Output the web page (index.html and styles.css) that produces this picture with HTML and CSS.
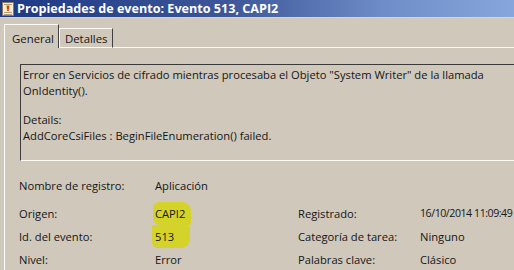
FILE: index.html
```html
<!DOCTYPE html>
<html lang="es">
<head>
<meta charset="utf-8">
<title>Propiedades de evento</title>
<link rel="stylesheet" href="styles.css">
</head>
<body>
<div class="window">
  <div class="titlebar">
    <svg class="ticon" width="12" height="14" viewBox="0 0 12 14">
      <rect x="0.5" y="0.5" width="11" height="13" fill="#f4ecd8" stroke="#8a7a5a"/>
      <rect x="2" y="2" width="8" height="1" fill="#b0a080"/>
      <rect x="2" y="10" width="8" height="1" fill="#b0a080"/>
      <rect x="2" y="12" width="8" height="1" fill="#b0a080"/>
      <path d="M4 3 L8 3 L7 9 L5 9 Z" fill="#e8c020"/>
      <rect x="5.2" y="4" width="1.6" height="3" fill="#c02020"/>
      <rect x="5.2" y="7.5" width="1.6" height="1.2" fill="#c02020"/>
    </svg>
    <span class="ttext">Propiedades de evento: Evento 513, CAPI2</span>
  </div>
  <div class="body">
    <div class="tabs">
      <div class="tab active">General</div>
      <div class="tab">Detalles</div>
      <div class="tabline"></div>
    </div>
    <div class="panel">
      <div class="msgbox">
        <p class="line">Error en Servicios de cifrado mientras procesaba el Objeto "System Writer" de la llamada</p>
        <p class="line">OnIdentity().</p>
        <p class="line gap">Details:</p>
        <p class="line">AddCoreCsiFiles : BeginFileEnumeration() failed.</p>
      </div>
      <div class="props">
        <div class="lbl first">Nombre de registro:</div>
        <div class="val first">Aplicación</div>
        <div class="first"></div>
        <div class="first"></div>

        <div class="lbl">Origen:</div>
        <div class="val"><span class="hl hl1">CAPI2</span></div>
        <div class="lbl">Registrado:</div>
        <div class="val date">16/10/2014 11:09:49</div>

        <div class="lbl">Id. del evento:</div>
        <div class="val"><span class="hl hl2">513</span></div>
        <div class="lbl">Categoría de tarea:</div>
        <div class="val">Ninguno</div>

        <div class="lbl">Nivel:</div>
        <div class="val">Error</div>
        <div class="lbl">Palabras clave:</div>
        <div class="val">Clásico</div>
      </div>
    </div>
  </div>
</div>
</body>
</html>
```
FILE: styles.css
```css
html, body {
  margin: 0;
  padding: 0;
  width: 514px;
  height: 270px;
  overflow: hidden;
  background: #cfc8bb;
}
.window {
  width: 514px;
  height: 270px;
  overflow: hidden;
  font-family: "Open Sans", "Noto Sans", sans-serif;
  font-size: 11.2px;
  color: #161616;
}
.titlebar {
  height: 17px;
  display: flex;
  align-items: center;
  gap: 3px;
  padding-left: 2px;
  background: linear-gradient(to right, #1d3984 0%, #3d5799 45%, #6f8dc8 75%, #86a6dc 100%);
  border-bottom: 1px solid #d8d4cc;
}
.ticon { flex: none; }
.ttext {
  color: #fff;
  font-weight: bold;
  font-size: 12.6px;
  white-space: nowrap;
}
.body {
  padding-top: 6px;
}
.tabs {
  display: flex;
  align-items: flex-end;
  padding-left: 4px;
  height: 24px;
}
.tab {
  box-sizing: border-box;
  height: 20px;
  padding: 0 4px 0 5px;
  border-top: 1px solid #fcfbf8;
  border-left: 1px solid #fcfbf8;
  border-right: 1px solid #404040;
  border-bottom: 1px solid #fcfbf8;
  display: flex;
  align-items: center;
  white-space: nowrap;
  font-size: 11.4px;
}
.tab.active {
  height: 24px;
  padding: 3px 4px 0 7px;
  border-bottom: none;
}
.tabline {
  flex: 1;
  border-bottom: 1px solid #fcfbf8;
}
.panel {
  margin-left: 4px;
  border-left: 1px solid #fcfbf8;
  padding: 16px 0 0 15px;
}
.msgbox {
  box-sizing: border-box;
  width: 520px;
  height: 97px;
  border-top: 1px solid #3a3a3a;
  border-left: 1px solid #3a3a3a;
  border-bottom: 1px solid #fcfbf8;
  padding: 2px 0 0 2px;
}
.line {
  margin: 0;
  line-height: 16px;
  white-space: nowrap;
}
.line.gap {
  margin-top: 13px;
}
.props {
  display: grid;
  grid-template-columns: 136px 143px 122px 1fr;
  align-items: center;
  margin-top: 13px;
  margin-left: -1px;
  white-space: nowrap;
}
.props > div {
  height: 23px;
  line-height: 23px;
}
.props > .first {
  height: 28px;
  line-height: 23px;
}
.date {
  font-size: 10.6px;
  letter-spacing: -0.45px;
}
.hl {
  display: inline-block;
  background: #d4d32a;
  line-height: 17px;
}
.hl1 {
  padding: 3px 6px 3px 2px;
  margin: 0 -6px 0 -2px;
  border-radius: 6px 9px 2px 7px;
}
.hl2 {
  padding: 3px 16px 3px 3px;
  margin: 0 -16px 0 -3px;
  border-radius: 2px 4px 9px 6px;
}
```
